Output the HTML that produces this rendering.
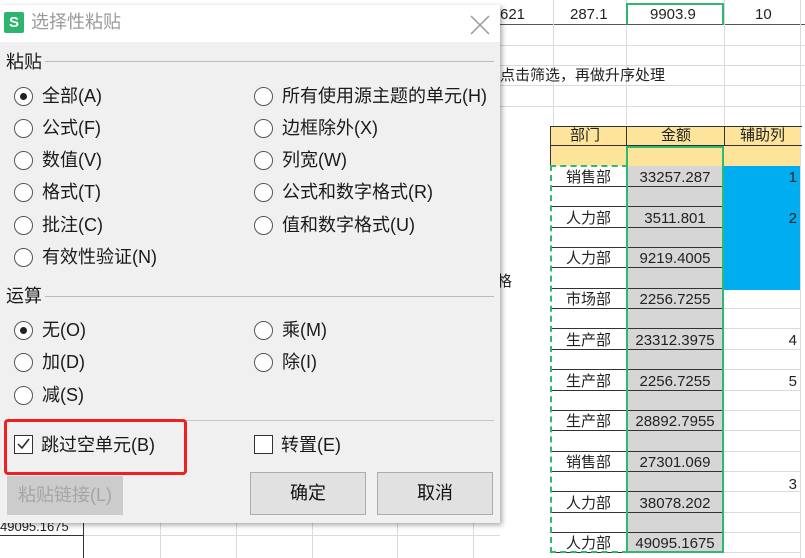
<!DOCTYPE html>
<html><head><meta charset="utf-8"><style>
*{margin:0;padding:0;box-sizing:border-box}
body{width:805px;height:558px;overflow:hidden;background:#fff;position:relative;font-family:"Liberation Sans","Noto Sans CJK SC",sans-serif}
.a{position:absolute}
.hl{position:absolute;height:1px;background:#d8dbe0}
.vl{position:absolute;width:1px;background:#d8dbe0}
.t{position:absolute;font-size:15px;color:#222;white-space:nowrap;line-height:20px}
.dlg{position:absolute;left:0;top:5px;width:500px;height:518px;background:#f0f0f0;box-shadow:2px 2px 5px rgba(0,0,0,.35)}
.lab{position:absolute;font-size:18px;color:#1a1a1a;white-space:nowrap;line-height:22px;font-family:"Liberation Sans","Noto Sans CJK SC",sans-serif}
.r{position:absolute;width:19px;height:19px;border:1.5px solid #555;border-radius:50%;background:#fff}
.r.on::after{content:"";position:absolute;left:4.5px;top:4.5px;width:7px;height:7px;border-radius:50%;background:#222}
.cb{position:absolute;width:19px;height:19px;border:1.5px solid #333;background:#fff}
.btn{position:absolute;background:#e1e1e1;border:1px solid #adadad;font-size:18px;text-align:center;line-height:40px;color:#111}
</style></head><body>
<div class="hl" style="left:0;top:24px;width:805px;background:#555"></div>
<div class="hl" style="left:500px;top:45px;width:305px"></div>
<div class="hl" style="left:500px;top:65px;width:305px"></div>
<div class="hl" style="left:500px;top:85px;width:305px"></div>
<div class="hl" style="left:500px;top:106px;width:305px"></div>
<div class="vl" style="left:553px;top:0;height:126px"></div>
<div class="vl" style="left:626px;top:0;height:126px"></div>
<div class="vl" style="left:724px;top:0;height:126px"></div>
<div class="vl" style="left:800px;top:0;height:558px"></div>
<div class="t" style="left:500px;top:5px">621</div>
<div class="t" style="left:570px;top:5px">287.1</div>
<div class="a" style="left:626px;top:3px;width:98px;height:22px;border:2px solid #2eb872;border-bottom:1px solid #555"></div>
<div class="t" style="left:650px;top:5px">9903.9</div>
<div class="t" style="left:755px;top:5px">10</div>
<div class="t" style="left:500px;top:66px">点击筛选，再做升序处理</div>
<div class="t" style="left:497px;top:272px">格</div>
<div class="a" style="left:550px;top:126px;width:250px;height:40px;background:#fde49a"></div>
<div class="a" style="left:550px;top:126px;width:252px;height:20px;border-top:1.5px solid #333;border-bottom:1.5px solid #333"></div>
<div class="vl" style="left:626px;top:126px;height:20px;background:#333"></div>
<div class="vl" style="left:724px;top:126px;height:20px;background:#333"></div>
<div class="vl" style="left:550px;top:126px;height:40px;background:#333"></div>
<div class="t" style="left:570px;top:126px">部门</div>
<div class="t" style="left:661px;top:126px">金额</div>
<div class="t" style="left:740px;top:126px">辅助列</div>
<div class="a" style="left:724px;top:166px;width:76px;height:124px;background:#00adef"></div>
<div class="a" style="left:626px;top:166px;width:98px;height:387px;background:#d6d6d6"></div>
<div id="rows"></div>
<div class="a" style="left:550px;top:165px;width:78px;height:388px;border:2px dashed #2eb872"></div>
<div class="a" style="left:626px;top:146px;width:98px;height:407px;border:2px solid #2eb872"></div>
<script>
var d=["销售部","33257.287","人力部","3511.801","人力部","9219.4005","市场部","2256.7255","生产部","23312.3975","生产部","2256.7255","生产部","28892.7955","销售部","27301.069","人力部","38078.202","人力部","49095.1675"];
var h="";
for(var i=0;i<19;i++){var y=166+i*20.35;h+='<div class="hl" style="left:550px;top:'+(y+20).toFixed(0)+'px;width:174px;background:#333"></div>';h+='<div class="hl" style="left:724px;top:'+(y+20).toFixed(0)+'px;width:76px;background:'+(i<6?'#00adef':'#d8dbe0')+'"></div>';}
for(var k=0;k<10;k++){var y=166+k*40.7;h+='<div class="t" style="left:566px;top:'+(y+2).toFixed(0)+'px">'+d[2*k]+'</div><div class="t" style="left:626px;width:98px;text-align:center;top:'+(y+2).toFixed(0)+'px">'+d[2*k+1]+'</div>';}
var n={0:1,1:2,4:4,5:5};for(var q in n){h+='<div class="t" style="left:770px;width:27px;text-align:right;top:'+(166+q*40.7+2).toFixed(0)+'px">'+n[q]+'</div>';}
h+='<div class="t" style="left:770px;width:27px;text-align:right;top:475px">3</div>';
document.getElementById("rows").innerHTML=h;
</script>
<div class="hl" style="left:0;top:535px;width:500px"></div>
<div class="hl" style="left:0;top:535px;width:83px;background:#333"></div>
<div class="vl" style="left:83px;top:523px;height:35px;background:#333"></div>
<div class="vl" style="left:160px;top:523px;height:35px"></div>
<div class="vl" style="left:236px;top:523px;height:35px"></div>
<div class="vl" style="left:312px;top:523px;height:35px"></div>
<div class="vl" style="left:397px;top:523px;height:35px"></div>
<div class="vl" style="left:473px;top:523px;height:35px"></div>
<div class="t" style="left:0;top:517px;font-size:13px">49095.1675</div>
<div class="dlg">
 <div class="a" style="left:0;top:0;width:500px;height:37px;background:#fff"></div>
 <div class="a" style="left:4px;top:7px;width:20px;height:21px;background:#2db56d;border-radius:2px;color:#fff;font-size:15px;font-weight:bold;text-align:center;line-height:21px">S</div>
 <div class="lab" style="left:31px;top:6px;color:#9a9a9a;font-size:18px">选择性粘贴</div>
 <svg class="a" style="left:469px;top:9px" width="22" height="22"><path d="M2 2L20 20M20 2L2 20" stroke="#999" stroke-width="1.5"/></svg>
 <div class="lab" style="left:6px;top:46px">粘贴</div>
 <div class="a" style="left:45px;top:56px;width:449px;height:1px;background:#bbb"></div>
</div>
<div id="opts"></div>
<script>
var o="";
function R(x,y,t,on){o+='<div class="r'+(on?' on':'')+'" style="left:'+(x-9)+'px;top:'+(y-9)+'px"></div><div class="lab" style="left:'+(x+19)+'px;top:'+(y-11)+'px">'+t+'</div>';}
R(23,96,"全部(A)",1);R(23,128,"公式(F)");R(23,160,"数值(V)");R(23,192,"格式(T)");R(23,225,"批注(C)");R(23,257,"有效性验证(N)");
R(263,96,"所有使用源主题的单元(H)");R(263,128,"边框除外(X)");R(263,160,"列宽(W)");R(263,192,"公式和数字格式(R)");R(263,225,"值和数字格式(U)");
R(23,330,"无(O)",1);R(23,362,"加(D)");R(23,395,"减(S)");R(263,330,"乘(M)");R(263,362,"除(I)");
document.getElementById("opts").innerHTML=o;
</script>
<div class="lab" style="left:6px;top:285px">运算</div>
<div class="a" style="left:45px;top:296px;width:449px;height:1px;background:#bbb"></div>
<div class="a" style="left:5px;top:420px;width:489px;height:1px;background:#c8c8c8"></div>
<div class="cb" style="left:14px;top:435px"><svg width="16" height="16" style="position:absolute;left:0;top:0"><path d="M3 8L7 12L14 3" fill="none" stroke="#222" stroke-width="1.5"/></svg></div>
<div class="lab" style="left:41px;top:434px">跳过空单元(B)</div>
<div class="cb" style="left:254px;top:435px"></div>
<div class="lab" style="left:281px;top:434px">转置(E)</div>
<div class="a" style="left:4px;top:419px;width:183px;height:56px;border:3px solid #f02020;border-radius:4px"></div>
<div class="btn" style="left:7px;top:476px;width:116px;height:39px;background:#cccccc;border-color:#ccc;color:#a5a5a5;line-height:37px">粘贴链接(L)</div>
<div class="btn" style="left:250px;top:472px;width:116px;height:43px">确定</div>
<div class="btn" style="left:377px;top:472px;width:116px;height:43px">取消</div>
</body></html>
